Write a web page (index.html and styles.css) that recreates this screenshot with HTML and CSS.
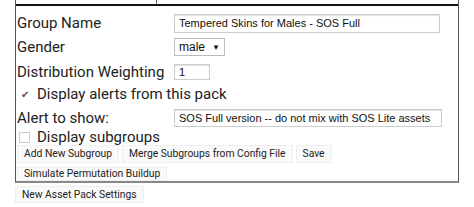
FILE: index.html
```html
<!DOCTYPE html>
<html lang="en">
<head>
  <meta charset="UTF-8" />
  <title>Asset Pack Group</title>
  <link rel="stylesheet" href="styles.css">
</head>
<body>
  <div class="group-box">
    <div class="group-head">
      <span class="head-cell"></span>
    </div>

    <div class="field-row row-name">
      <label>Group Name</label>
      <input type="text" class="txt wide" value="Tempered Skins for Males - SOS Full">
    </div>
    <div class="field-row row-gender">
      <label>Gender</label>
      <div class="fake-select">male <span class="arrow">&#9660;</span></div>
    </div>
    <div class="field-row row-weight">
      <label>Distribution Weighting</label>
      <input type="text" class="txt small" value="1">
    </div>
    <div class="check-row row-alerts">
      <span class="box checked">&#10004;</span>
      <span>Display alerts from this pack</span>
    </div>
    <div class="field-row row-alert">
      <label>Alert to show:</label>
      <input type="text" class="txt wider" value="SOS Full version -- do not mix with SOS Lite assets">
    </div>
    <div class="check-row row-sub">
      <span class="box"></span>
      <span>Display subgroups</span>
    </div>
    <div class="btn-row">
      <button class="btn">Add New Subgroup</button>
      <button class="btn">Merge Subgroups from Config File</button>
      <button class="btn">Save</button>
    </div>
    <div class="btn-row last">
      <button class="btn">Simulate Permutation Buildup</button>
    </div>
  </div>
  <button class="btn new-btn">New Asset Pack Settings</button>
</body>
</html>
```

FILE: styles.css
```css
body {
  margin: 0;
  font-family: Roboto, "Noto Sans", sans-serif;
  background: #ffffff;
  color: #222;
}

.group-box {
  margin-left: 15px;
  width: 442px;
  border-left: 1px solid #555;
  border-right: 1px solid #555;
  border-bottom: 2px solid #888;
}

.group-head {
  height: 4px;
  border-bottom: 2px solid #111;
  position: relative;
}

.head-cell {
  position: absolute;
  left: 140px;
  top: 0;
  height: 4px;
  border-left: 1px solid #666;
}

.field-row {
  display: grid;
  grid-template-columns: 158px 1fr;
  align-items: center;
  font-size: 15px;
}

.field-row label {
  padding-left: 1px;
}

.row-name { height: 26px; margin-top: 4px; }
.row-gender { height: 22px; }
.row-weight { height: 27px; }
.row-alert { height: 24px; }

.txt {
  font-family: "Liberation Sans", Arial, sans-serif;
  font-size: 11px;
  color: #111;
  border: 1px solid #ccc;
  box-shadow: inset 0 1px 1px #e4e4e4;
  padding: 1px 4px;
  margin: 0;
  box-sizing: border-box;
}

.wide { width: 266px; height: 19px; }
.small { width: 36px; height: 16px; }
.wider { width: 268px; height: 18px; }

.fake-select {
  font-family: "Liberation Sans", Arial, sans-serif;
  font-size: 12px;
  color: #111;
  width: 51px;
  height: 18px;
  box-sizing: border-box;
  border: 1px solid #bbb;
  padding: 2px 4px;
  display: flex;
  justify-content: space-between;
  align-items: center;
}

.arrow {
  font-size: 8px;
}

.check-row {
  display: flex;
  align-items: center;
  font-size: 15px;
  padding-left: 3px;
}

.row-alerts { height: 16px; margin-top: 1px; margin-bottom: 4px; }
.row-sub { height: 12px; margin-top: 1px; margin-bottom: 2px; }

.box {
  width: 11px;
  height: 11px;
  margin-right: 7px;
  font-size: 10px;
  line-height: 11px;
  text-align: center;
  color: #555;
  box-sizing: border-box;
}

.box:not(.checked) {
  border: 1px solid #ccc;
}

.btn-row {
  display: flex;
  gap: 3px;
  padding-left: 1px;
  margin-bottom: 4px;
}

.btn-row.last {
  margin-bottom: 0;
}

.btn {
  font-family: Roboto, "Noto Sans", sans-serif;
  font-size: 10.3px;
  color: #222;
  background: #fafafa;
  border: 1px solid #eee;
  padding: 2px 6px;
  height: 18px;
  line-height: 12px;
  margin: 0;
}

.btn-row.last .btn {
  height: 14px;
  padding-top: 0;
  padding-bottom: 0;
}

.new-btn {
  margin: 1px 0 0 15px;
  height: 17px;
}
```
